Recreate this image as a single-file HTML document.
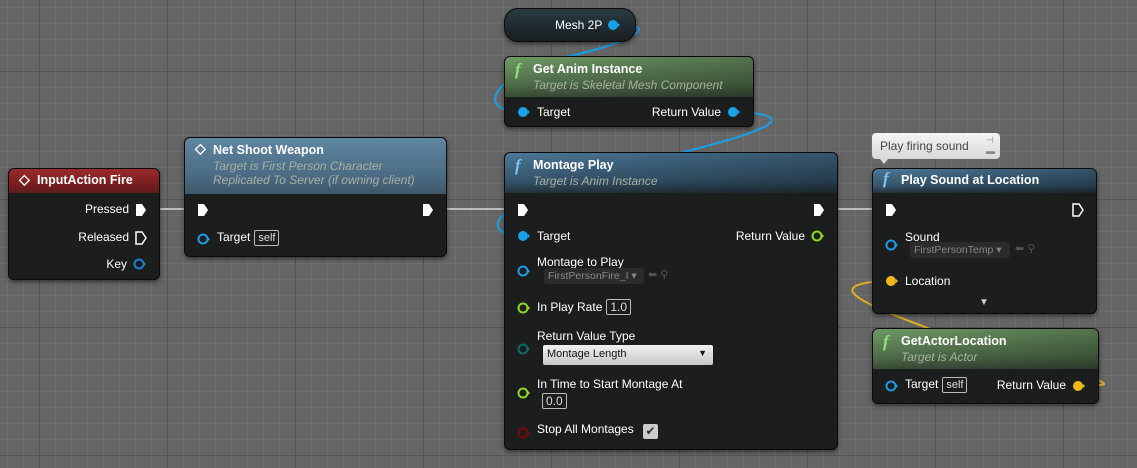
<!DOCTYPE html>
<html><head><style>
*{box-sizing:border-box;margin:0;padding:0}
body{width:1137px;height:468px;overflow:hidden;position:relative;font-family:"Liberation Sans",sans-serif;color:#fff;
background-color:#656565;
background-image:linear-gradient(#555 1px,transparent 1px),linear-gradient(90deg,#555 1px,transparent 1px),linear-gradient(#6f6f6f 1px,transparent 1px),linear-gradient(90deg,#6f6f6f 1px,transparent 1px);
background-size:128px 128px,128px 128px,16px 16px,16px 16px;background-position:39px 71px,39px 71px,7px 7px,7px 7px}
.n{position:absolute;background:#1c1e1e;border:1px solid #0a0a0a;border-radius:6px;box-shadow:0 2px 5px rgba(0,0,0,.5);overflow:hidden}
.h{position:relative;padding:5px 0 0 28px;font-weight:bold;font-size:12.5px;color:#fff}
.h .s{font-weight:normal;font-style:italic;color:#a8b0a0;font-size:12px;line-height:14px;display:block;margin-top:2px}
.ic{position:absolute;left:10px;top:3px;font-family:"Liberation Serif",serif;font-style:italic;font-size:17px;font-weight:bold}
.t{position:absolute;font-size:12px;color:#fff;white-space:nowrap}
.box{display:inline-block;border:1px solid #bbb;border-radius:2px;padding:0 3px;font-size:11px;line-height:14px;margin-left:4px;color:#ddd}
.sub{position:absolute;font-size:10.5px;color:#888;background:#2b2b2b;border-radius:3px;padding:2px 4px;white-space:nowrap}
</style></head><body>
<svg width="1137" height="468" style="position:absolute;left:0;top:0">
<g fill="none" stroke-width="2">
<path d="M160 209 L190 209" stroke="#bdbdbd"/>
<path d="M447 209 L512 209" stroke="#bdbdbd"/>
<path d="M838 209 L880 209" stroke="#bdbdbd"/>
<path d="M614 24 C660 24,640 40,570 56 C500 70,470 110,520 112" stroke="#1aa0e8"/>
<path d="M738 112 C800 115,780 130,650 160 C560 180,460 220,512 236" stroke="#1aa0e8"/>
<path d="M890 280 C820 285,850 300,960 340 C1060 370,1150 390,1078 384" stroke="#e0b020"/>
</g></svg>

<div class="n" style="left:8px;top:168px;width:152px;height:112px">
<div class="h" style="height:24px;background:linear-gradient(180deg,#9a2a2a,#6e1c1c 80%,#5a2020);padding-top:4px">InputAction Fire<span class="ic" style="font-style:normal;font-size:14px;top:3px">◇</span></div>
<div class="t" style="right:30px;top:33px">Pressed</div>
<svg style="position:absolute;right:12px;top:34px" width="12" height="14"><path d="M1 1h6l4 6-4 6H1z" fill="#fff"/></svg>
<div class="t" style="right:30px;top:61px">Released</div>
<svg style="position:absolute;right:12px;top:62px" width="12" height="14"><path d="M1 1h6l4 6-4 6H1z" fill="none" stroke="#fff" stroke-width="1.5"/></svg>
<div class="t" style="right:32px;top:88px">Key</div>
<svg style="position:absolute;right:12px;top:89px" width="14" height="12"><circle cx="6" cy="6" r="4.5" fill="none" stroke="#1a7ad8" stroke-width="2"/><path d="M11 4l2 2-2 2z" fill="#1a7ad8"/></svg>
</div>

<div class="n" style="left:184px;top:137px;width:263px;height:120px">
<div class="h" style="height:56px;background:linear-gradient(180deg,#5f86a2,#4a6a82 70%,#3e5668)">Net Shoot Weapon<span class="s">Target is First Person Character<br>Replicated To Server (if owning client)</span><span class="ic" style="font-style:normal;font-size:14px">◇</span></div>
<svg style="position:absolute;left:12px;top:65px" width="12" height="14"><path d="M1 1h6l4 6-4 6H1z" fill="#fff"/></svg>
<svg style="position:absolute;right:12px;top:65px" width="12" height="14"><path d="M1 1h6l4 6-4 6H1z" fill="#fff"/></svg>
<svg style="position:absolute;left:12px;top:95px" width="14" height="12"><circle cx="6" cy="6" r="4.5" fill="none" stroke="#1a9ae8" stroke-width="2"/><path d="M11 4l2 2-2 2z" fill="#1a9ae8"/></svg>
<div class="t" style="left:32px;top:92px">Target<span class="box">self</span></div>
</div>

<div class="n" style="left:504px;top:8px;width:132px;height:34px;border-radius:14px;background:linear-gradient(180deg,#2a3a44,#1d2a30 60%,#1c1e1e)">
<div class="t" style="left:50px;top:9px">Mesh 2P</div>
<svg style="position:absolute;left:102px;top:10px" width="14" height="12"><circle cx="6" cy="6" r="5" fill="#1aa0e8"/><path d="M11 4l2 2-2 2z" fill="#1aa0e8"/></svg>
</div>

<div class="n" style="left:504px;top:56px;width:250px;height:71px">
<div class="h" style="height:40px;background:linear-gradient(90deg,rgba(0,0,0,0),rgba(0,0,0,.25)),linear-gradient(180deg,#6f9a66,#4e6c48 70%,#3a4a38)">Get Anim Instance<span class="s">Target is Skeletal Mesh Component</span><span class="ic" style="color:#8ee07a">f</span></div>
<svg style="position:absolute;left:12px;top:49px" width="14" height="12"><circle cx="6" cy="6" r="5" fill="#1aa0e8"/><path d="M11 4l2 2-2 2z" fill="#1aa0e8"/></svg>
<div class="t" style="left:32px;top:48px">Target</div>
<div class="t" style="right:32px;top:48px">Return Value</div>
<svg style="position:absolute;right:12px;top:49px" width="14" height="12"><circle cx="6" cy="6" r="5" fill="#1aa0e8"/><path d="M11 4l2 2-2 2z" fill="#1aa0e8"/></svg>
</div>

<div class="n" style="left:504px;top:152px;width:334px;height:298px">
<div class="h" style="height:40px;background:linear-gradient(90deg,rgba(0,0,0,0),rgba(0,0,0,.3)),linear-gradient(180deg,#4c7898,#35556c 70%,#26333c)">Montage Play<span class="s">Target is Anim Instance</span><span class="ic" style="color:#7ec0f0">f</span></div>
<svg style="position:absolute;left:12px;top:50px" width="12" height="14"><path d="M1 1h6l4 6-4 6H1z" fill="#fff"/></svg>
<svg style="position:absolute;right:12px;top:50px" width="12" height="14"><path d="M1 1h6l4 6-4 6H1z" fill="#fff"/></svg>
<svg style="position:absolute;left:12px;top:77px" width="14" height="12"><circle cx="6" cy="6" r="5" fill="#1aa0e8"/><path d="M11 4l2 2-2 2z" fill="#1aa0e8"/></svg>
<div class="t" style="left:32px;top:76px">Target</div>
<div class="t" style="right:32px;top:76px">Return Value</div>
<svg style="position:absolute;right:12px;top:77px" width="14" height="12"><circle cx="6" cy="6" r="4.5" fill="none" stroke="#8ad82a" stroke-width="2"/><path d="M11 4l2 2-2 2z" fill="#8ad82a"/></svg>
<div class="t" style="left:32px;top:102px">Montage to Play</div>
<svg style="position:absolute;left:12px;top:112px" width="14" height="12"><circle cx="6" cy="6" r="4.5" fill="none" stroke="#1a9ae8" stroke-width="2"/><path d="M11 4l2 2-2 2z" fill="#1a9ae8"/></svg>
<div class="sub" style="left:39px;top:115px;width:100px;overflow:hidden">FirstPersonFire_I ▾</div>
<div class="t" style="left:143px;top:115px;color:#555;font-size:11px">⬅ ⚲</div>
<svg style="position:absolute;left:12px;top:149px" width="14" height="12"><circle cx="6" cy="6" r="4.5" fill="none" stroke="#8ad82a" stroke-width="2"/><path d="M11 4l2 2-2 2z" fill="#8ad82a"/></svg>
<div class="t" style="left:32px;top:146px">In Play Rate<span class="box" style="font-size:12px">1.0</span></div>
<div class="t" style="left:32px;top:176px">Return Value Type</div>
<svg style="position:absolute;left:12px;top:190px" width="14" height="12"><circle cx="6" cy="6" r="4.5" fill="none" stroke="#0a6a60" stroke-width="2"/><path d="M11 4l2 2-2 2z" fill="#0a6a60"/></svg>
<div style="position:absolute;left:38px;top:192px;width:170px;height:20px;background:linear-gradient(#f0f0f0,#c8c8c8);border-radius:2px;color:#111;font-size:11px;padding:3px 4px">Montage Length<span style="position:absolute;right:6px;top:3px;font-size:9px">▼</span></div>
<div class="t" style="left:32px;top:224px">In Time to Start Montage At</div>
<svg style="position:absolute;left:12px;top:234px" width="14" height="12"><circle cx="6" cy="6" r="4.5" fill="none" stroke="#8ad82a" stroke-width="2"/><path d="M11 4l2 2-2 2z" fill="#8ad82a"/></svg>
<div class="t" style="left:37px;top:240px"><span class="box" style="margin:0;font-size:12px">0.0</span></div>
<svg style="position:absolute;left:12px;top:274px" width="14" height="12"><circle cx="6" cy="6" r="4.5" fill="none" stroke="#7a0a0a" stroke-width="2"/><path d="M11 4l2 2-2 2z" fill="#7a0a0a"/></svg>
<div class="t" style="left:32px;top:269px">Stop All Montages</div>
<div style="position:absolute;left:138px;top:271px;width:15px;height:15px;background:#ccc;border-radius:2px;color:#333;font-size:12px;line-height:15px;text-align:center">✔</div>
</div>

<div style="position:absolute;left:872px;top:133px;width:128px;height:26px;background:linear-gradient(#f4f4f4,#d8d8d8);border-radius:4px;color:#444;font-size:12px;padding:6px 8px">Play firing sound<span style="position:absolute;right:5px;top:2px;font-size:9px;color:#888">⊣<br>▬</span></div>
<div style="position:absolute;left:880px;top:159px;width:0;height:0;border-left:4px solid transparent;border-right:4px solid transparent;border-top:5px solid #ddd"></div>

<div class="n" style="left:872px;top:168px;width:225px;height:146px">
<div class="h" style="height:24px;background:linear-gradient(90deg,rgba(0,0,0,0),rgba(0,0,0,.3)),linear-gradient(180deg,#4c7898,#35556c 70%,#26333c);padding-top:4px">Play Sound at Location<span class="ic" style="color:#7ec0f0;top:0">f</span></div>
<svg style="position:absolute;left:12px;top:34px" width="12" height="14"><path d="M1 1h6l4 6-4 6H1z" fill="#fff"/></svg>
<svg style="position:absolute;right:12px;top:34px" width="12" height="14"><path d="M1 1h6l4 6-4 6H1z" fill="none" stroke="#fff" stroke-width="1.5"/></svg>
<div class="t" style="left:32px;top:61px">Sound</div>
<svg style="position:absolute;left:12px;top:70px" width="14" height="12"><circle cx="6" cy="6" r="4.5" fill="none" stroke="#1a9ae8" stroke-width="2"/><path d="M11 4l2 2-2 2z" fill="#1a9ae8"/></svg>
<div class="sub" style="left:37px;top:73px;width:100px;overflow:hidden">FirstPersonTemp ▾</div>
<div class="t" style="left:142px;top:73px;color:#555;font-size:11px">⬅ ⚲</div>
<svg style="position:absolute;left:12px;top:106px" width="14" height="12"><circle cx="6" cy="6" r="5" fill="#f0b818"/><path d="M11 4l2 2-2 2z" fill="#f0b818"/></svg>
<div class="t" style="left:32px;top:105px">Location</div>
<div class="t" style="left:106px;top:128px;font-size:10px;color:#ccc">▼</div>
</div>

<div class="n" style="left:872px;top:328px;width:227px;height:76px">
<div class="h" style="height:40px;background:linear-gradient(90deg,rgba(0,0,0,0),rgba(0,0,0,.25)),linear-gradient(180deg,#6f9a66,#4e6c48 70%,#3a4a38)">GetActorLocation<span class="s">Target is Actor</span><span class="ic" style="color:#8ee07a">f</span></div>
<svg style="position:absolute;left:12px;top:51px" width="14" height="12"><circle cx="6" cy="6" r="4.5" fill="none" stroke="#1a9ae8" stroke-width="2"/><path d="M11 4l2 2-2 2z" fill="#1a9ae8"/></svg>
<div class="t" style="left:32px;top:48px">Target<span class="box">self</span></div>
<div class="t" style="right:32px;top:49px">Return Value</div>
<svg style="position:absolute;right:12px;top:51px" width="14" height="12"><circle cx="6" cy="6" r="5" fill="#f0b818"/><path d="M11 4l2 2-2 2z" fill="#f0b818"/></svg>
</div>
</body></html>
